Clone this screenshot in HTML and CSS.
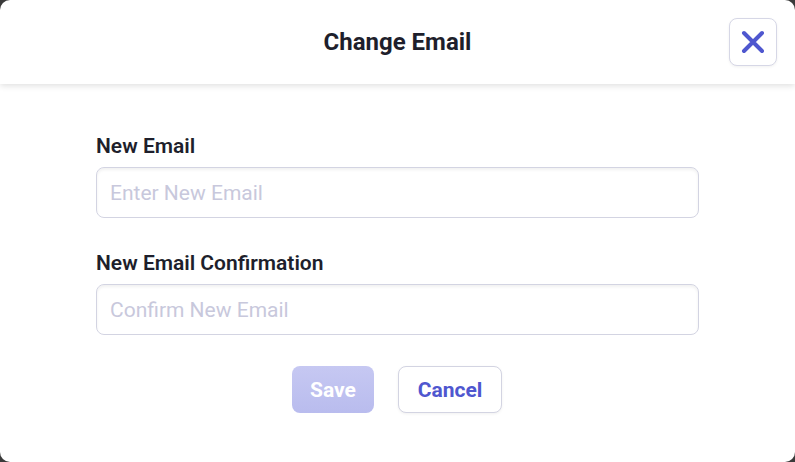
FILE: index.html
```html
<!DOCTYPE html>
<html lang="en">
<head>
<meta charset="utf-8">
<title>Change Email</title>
<link rel="stylesheet" href="styles.css">
</head>
<body>
<div class="modal">
  <header class="modal-header">
    <h1 class="modal-title">Change Email</h1>
    <button class="close-btn" type="button" aria-label="Close">
      <svg width="24" height="24" viewBox="0 0 24 24" aria-hidden="true">
        <path d="M3 3 L21 21 M21 3 L3 21" stroke="currentColor" stroke-width="4" stroke-linecap="round" fill="none"/>
      </svg>
    </button>
  </header>
  <form class="modal-body">
    <div class="field">
      <label class="field-label" for="new-email">New Email</label>
      <input class="field-input" id="new-email" type="email" placeholder="Enter New Email">
    </div>
    <div class="field">
      <label class="field-label" for="confirm-email">New Email Confirmation</label>
      <input class="field-input" id="confirm-email" type="email" placeholder="Confirm New Email">
    </div>
    <div class="actions">
      <button class="btn btn-save" type="button" disabled>Save</button>
      <button class="btn btn-cancel" type="button">Cancel</button>
    </div>
  </form>
</div>
</body>
</html>
```

FILE: styles.css
```css
html, body {
  margin: 0;
  padding: 0;
  height: 100%;
}
body {
  background: #3a3a3a;
  font-family: Roboto, "Liberation Sans", sans-serif;
  color: #1e1f2c;
}
.modal {
  width: 795px;
  height: 462px;
  background: #ffffff;
  border-radius: 10px;
  overflow: hidden;
  display: flex;
  flex-direction: column;
}
.modal-header {
  height: 84px;
  flex: none;
  display: flex;
  align-items: center;
  justify-content: center;
  position: relative;
  box-shadow: 0 2px 6px rgba(0, 0, 0, 0.12);
  z-index: 1;
}
.modal-title {
  margin: 0;
  font-size: 24px;
  font-weight: 700;
  color: #1e1f2c;
  letter-spacing: 0;
}
.close-btn {
  position: absolute;
  top: 18px;
  right: 18px;
  width: 48px;
  height: 48px;
  border: 1px solid #d6d7e6;
  border-radius: 8px;
  background: #ffffff;
  color: #4f57cf;
  display: flex;
  align-items: center;
  justify-content: center;
  padding: 0;
  box-shadow: 0 1px 3px rgba(0, 0, 0, 0.06);
}
.modal-body {
  margin: 0;
  padding: 51px 96px 0 96px;
  display: flex;
  flex-direction: column;
}
.field {
  display: flex;
  flex-direction: column;
  gap: 10px;
  margin-bottom: 34px;
}
.field + .field {
  margin-bottom: 31px;
}
.field-label {
  font-size: 21px;
  font-weight: 600;
  line-height: 22px;
  color: #1e1f2c;
}
.field-input {
  box-sizing: border-box;
  width: 603px;
  height: 51px;
  border: 1px solid #d3d4e2;
  border-radius: 8px;
  padding: 0 13px;
  font-family: Roboto, "Liberation Sans", sans-serif;
  font-size: 21px;
  color: #1e1f2c;
  background: #ffffff;
  box-shadow: inset 0 2px 3px rgba(0, 0, 0, 0.06);
  outline: none;
}
.field-input::placeholder {
  color: #c8c8dc;
}
.actions {
  display: flex;
  justify-content: center;
  gap: 24px;
  padding-right: 1px;
}
.btn {
  height: 47px;
  border-radius: 8px;
  font-family: Roboto, "Liberation Sans", sans-serif;
  font-size: 21px;
  font-weight: 700;
  padding: 0;
}
.btn-save {
  width: 82px;
  border: none;
  background: linear-gradient(#c6c8f2, #b9bcee);
  color: #ffffff;
}
.btn-cancel {
  width: 104px;
  border: 1px solid #d3d4e2;
  background: #ffffff;
  color: #4f57cf;
  box-shadow: 0 1px 3px rgba(0, 0, 0, 0.06);
}
```
